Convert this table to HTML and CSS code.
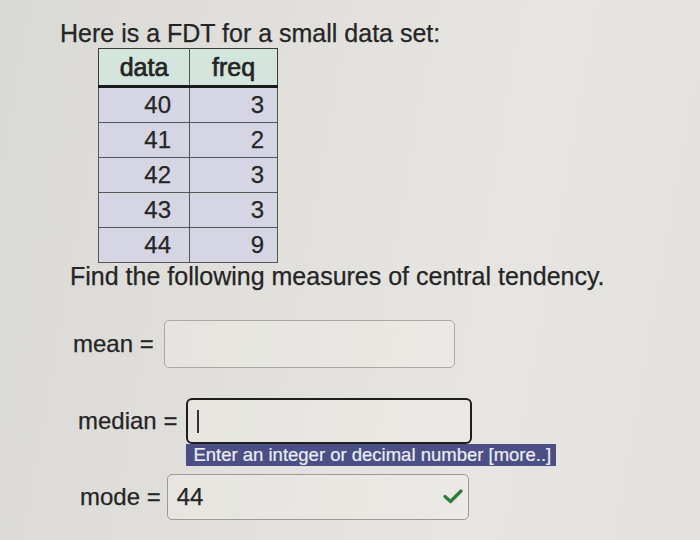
FILE: index.html
```html
<!DOCTYPE html>
<html>
<head>
<meta charset="utf-8">
<link rel="stylesheet" href="styles.css">
</head>
<body>
<div class="page">
  <p class="title">Here is a FDT for a small data set:</p>
  <table class="fdt">
    <thead>
      <tr><th>data</th><th>freq</th></tr>
    </thead>
    <tbody>
      <tr><td>40</td><td>3</td></tr>
      <tr><td>41</td><td>2</td></tr>
      <tr><td>42</td><td>3</td></tr>
      <tr><td>43</td><td>3</td></tr>
      <tr><td>44</td><td>9</td></tr>
    </tbody>
  </table>
  <p class="prompt">Find the following measures of central tendency.</p>

  <div class="field field-mean">
    <span class="label">mean =</span>
    <div class="box box-mean"></div>
  </div>

  <div class="field field-median">
    <span class="label">median =</span>
    <div class="box-wrap">
      <div class="box box-median"><span class="caret"></span></div>
      <div class="tip">Enter an integer or decimal number [more..]</div>
    </div>
  </div>

  <div class="field field-mode">
    <span class="label">mode =</span>
    <div class="box box-mode">
      <span class="value">44</span>
      <svg class="check" width="20" height="16" viewBox="0 0 20 16"><path d="M2 8.5 L7.5 13.5 L18 3" fill="none" stroke="#2f7a3a" stroke-width="3.2" stroke-linecap="round" stroke-linejoin="round"/></svg>
    </div>
  </div>
</div>
</body>
</html>
```

FILE: styles.css
```css
html, body {
  margin: 0;
  padding: 0;
}
body {
  width: 700px;
  height: 540px;
  overflow: hidden;
  font-family: "Liberation Sans", Arial, sans-serif;
  color: #252525;
  -webkit-text-stroke: 0.25px #252525;
  background: linear-gradient(100deg, #d9d9d5 0%, #e0dfdb 35%, #e7e5e1 70%, #e2e1dd 100%);
}
.page {
  padding: 18px 0 0 60px;
}
.title {
  margin: 0;
  font-size: 25px;
  line-height: 30px;
}
.fdt {
  margin: 0 0 0 38px;
  border-collapse: collapse;
  font-size: 24px;
  border: 1.5px solid #3a3a3a;
}
.fdt th {
  background: #d3e5dc;
  font-weight: normal;
  font-size: 25px;
  height: 36px;
  padding: 0;
  line-height: 36px;
  border-left: 1px solid #555;
  border-bottom: 3px solid #1a1a1a;
  -webkit-text-stroke: 0.7px #252525;
}
.fdt th:first-child { width: 90px; border-left: none; }
.fdt th:last-child { width: 87px; }
.fdt td {
  background: #d5d5e3;
  height: 34px;
  padding: 0;
  line-height: 34px;
  text-align: right;
  border: 1px solid #555;
}
.fdt td:first-child { padding-right: 18px; }
.fdt td:last-child { padding-right: 13px; }
.prompt {
  margin: 0 0 0 10px;
  font-size: 25px;
  line-height: 26px;
}
.field {
  display: flex;
  align-items: flex-start;
}
.label {
  font-size: 24px;
  line-height: 48px;
  white-space: nowrap;
}
.box {
  box-sizing: border-box;
  background: rgba(240, 240, 236, 0.35);
}
.field-mean {
  margin: 31px 0 0 13px;
}
.field-mean .label { margin-right: 10px; }
.box-mean {
  width: 291px;
  height: 48px;
  border: 1px solid #a9a9a6;
  border-radius: 5px;
}
.field-median {
  margin: 30px 0 0 18px;
}
.field-median .label { margin-right: 9px; line-height: 46px; }
.box-median {
  width: 286px;
  height: 46px;
  border: 2.5px solid #1e1e1e;
  border-radius: 6px;
  display: flex;
  align-items: center;
  padding-left: 9px;
}
.caret {
  display: block;
  width: 1.5px;
  height: 23px;
  background: #333;
}
.tip {
  display: inline-block;
  background: #4b4f86;
  color: #eceef4;
  -webkit-text-stroke: 0.2px #eceef4;
  font-size: 18.5px;
  line-height: 22px;
  padding: 0 5px 0 7px;
  white-space: nowrap;
}
.field-mode {
  margin: 8px 0 0 20px;
}
.field-mode .label { margin-right: 6px; line-height: 46px; }
.box-mode {
  width: 302px;
  height: 46px;
  border: 1px solid #9a9a97;
  border-radius: 5px;
  display: flex;
  align-items: center;
  justify-content: space-between;
  padding: 0 5px 0 9px;
  font-size: 24px;
}
.check { margin-top: -2px; }
```
